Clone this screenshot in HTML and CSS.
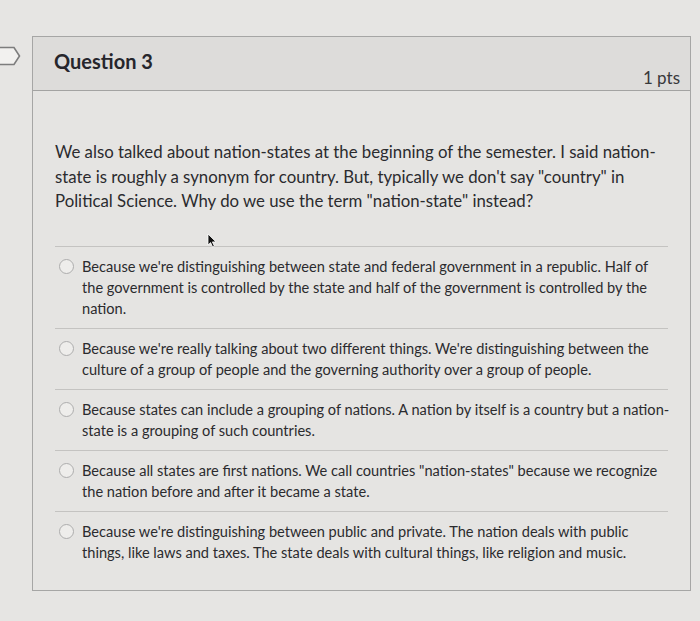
FILE: index.html
```html
<!DOCTYPE html>
<html lang="en">
<head>
<meta charset="utf-8">
<title>Question 3</title>
<link rel="stylesheet" href="styles.css">
</head>
<body>
<div class="page">
  <svg class="flag" width="22" height="20" viewBox="0 0 22 20"><path d="M-2 1.5 H14 L19.5 10 L14 18.5 H-2" fill="#f2f1ef" stroke="#7d7d7d" stroke-width="1.6"/></svg>
  <div class="card">
    <div class="card-header">
      <h2 class="title">Question 3</h2>
      <span class="pts">1 pts</span>
    </div>
    <div class="card-body">
      <p class="question">We also talked about nation-states at the beginning of the semester. I said nation-state is roughly a synonym for country. But, typically we don't say "country" in Political Science. Why do we use the term "nation-state" instead?</p>
      <svg class="cursor" width="12" height="16" viewBox="0 0 12 16"><path d="M1 1 L1 12 L3.6 9.6 L5.6 14 L7.4 13.2 L5.4 8.9 L9 8.9 Z" fill="#111" stroke="#fff" stroke-width="0.8"/></svg>
      <div class="answers">
        <label class="answer"><span class="radio"></span><span class="text">Because we're distinguishing between state and federal government in a republic. Half of<br>the government is controlled by the state and half of the government is controlled by the<br>nation.</span></label>
        <label class="answer"><span class="radio"></span><span class="text">Because we're really talking about two different things. We're distinguishing between the<br>culture of a group of people and the governing authority over a group of people.</span></label>
        <label class="answer"><span class="radio"></span><span class="text">Because states can include a grouping of nations. A nation by itself is a country but a nation-<br>state is a grouping of such countries.</span></label>
        <label class="answer"><span class="radio"></span><span class="text">Because all states are first nations. We call countries "nation-states" because we recognize<br>the nation before and after it became a state.</span></label>
        <label class="answer"><span class="radio"></span><span class="text">Because we're distinguishing between public and private. The nation deals with public<br>things, like laws and taxes. The state deals with cultural things, like religion and music.</span></label>
      </div>
    </div>
  </div>
</div>
</body>
</html>
```
FILE: styles.css
```css
html, body {
  margin: 0;
  padding: 0;
}
body {
  background: #e6e5e3;
  font-family: Lato, "Open Sans", sans-serif;
  color: #2b2b2e;
  width: 700px;
  height: 621px;
  overflow: hidden;
}
.page {
  position: relative;
  padding: 36px 0 0 32px;
}
.flag {
  position: absolute;
  left: 0;
  top: 46px;
}
.card {
  width: 657px;
  border: 1px solid #a6a6a5;
  background: #e5e4e2;
}
.card-header {
  height: 53px;
  background: #dddcda;
  border-bottom: 1px solid #a3a3a2;
  display: flex;
  justify-content: space-between;
  padding: 0 10px 0 21px;
}
.title {
  margin: 0;
  padding-top: 12px;
  font-size: 20px;
  line-height: 24px;
  font-weight: 700;
  color: #26262c;
  align-self: flex-start;
}
.pts {
  align-self: flex-end;
  padding-bottom: 2px;
  font-size: 17px;
  line-height: 20px;
  color: #38383b;
}
.card-body {
  position: relative;
  padding: 49px 20px 18px 22px;
}
.question {
  margin: 0 0 32px;
  font-size: 16.8px;
  line-height: 24.5px;
  color: #2b2b2e;
  width: 612px;
}
.cursor {
  position: absolute;
  left: 174px;
  top: 142px;
}
.answers {
  width: 613px;
}
.answer {
  display: flex;
  align-items: flex-start;
  border-top: 1px solid #c4c3c1;
  padding: 9px 0 9px 4px;
}
.radio {
  flex: none;
  width: 13px;
  height: 13px;
  border: 1px solid #adadad;
  border-radius: 50%;
  background: #eeedeb;
  margin: 3px 8px 0 0;
}
.text {
  font-size: 14.6px;
  line-height: 21px;
  color: #2b2b2e;
  white-space: nowrap;
}
```
